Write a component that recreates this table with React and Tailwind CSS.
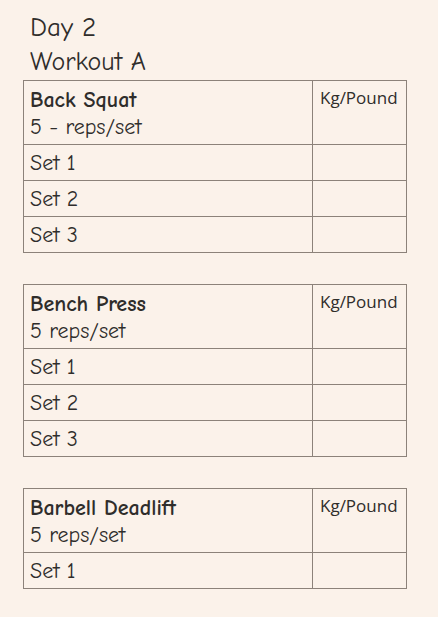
import React from 'react';

const workouts = [
  { name: 'Back Squat', reps: '5 - reps/set', sets: ['Set 1', 'Set 2', 'Set 3'] },
  { name: 'Bench Press', reps: '5 reps/set', sets: ['Set 1', 'Set 2', 'Set 3'] },
  { name: 'Barbell Deadlift', reps: '5 reps/set', sets: ['Set 1'] },
];

const comic = "font-['Comic_Sans_MS','Comic_Neue','DejaVu_Sans',sans-serif]";

const ExerciseTable = ({ item }) => (
  <table className="w-[384px] border-collapse">
    <tbody>
      <tr className="h-[64px]">
        <td className="w-[289px] border border-[#8c827a] px-[6px] pt-[6px] pb-[3px] align-top">
          <div className="text-[22px] font-bold leading-[27px]">{item.name}</div>
          <div className="text-[22px] leading-[27px]">{item.reps}</div>
        </td>
        <td className="border border-[#8c827a] pl-[7px] pt-[5px] align-top">
          <div className="font-['Open_Sans',sans-serif] text-[17px] leading-[24px]">Kg/Pound</div>
        </td>
      </tr>
      {item.sets.map((s) => (
        <tr key={s} className="h-[36px]">
          <td className="border border-[#8c827a] px-[6px] align-middle text-[22px] leading-[28px]">{s}</td>
          <td className="border border-[#8c827a]"></td>
        </tr>
      ))}
    </tbody>
  </table>
);

export default function App() {
  return (
    <div className={`min-h-[617px] w-full bg-[#fbf2ea] text-[#2f2d2b] ${comic}`}>
      <div className="pl-[23px] pt-[11px]">
        <h1 className="pl-[7px] text-[27px] leading-[34px]">Day 2</h1>
        <h2 className="pl-[7px] pt-[1px] text-[26px] leading-[32px]">Workout A</h2>
        <div className="mt-[2px] flex flex-col gap-[31px]">
          {workouts.map((w) => (
            <ExerciseTable key={w.name} item={w} />
          ))}
        </div>
      </div>
    </div>
  );
}
